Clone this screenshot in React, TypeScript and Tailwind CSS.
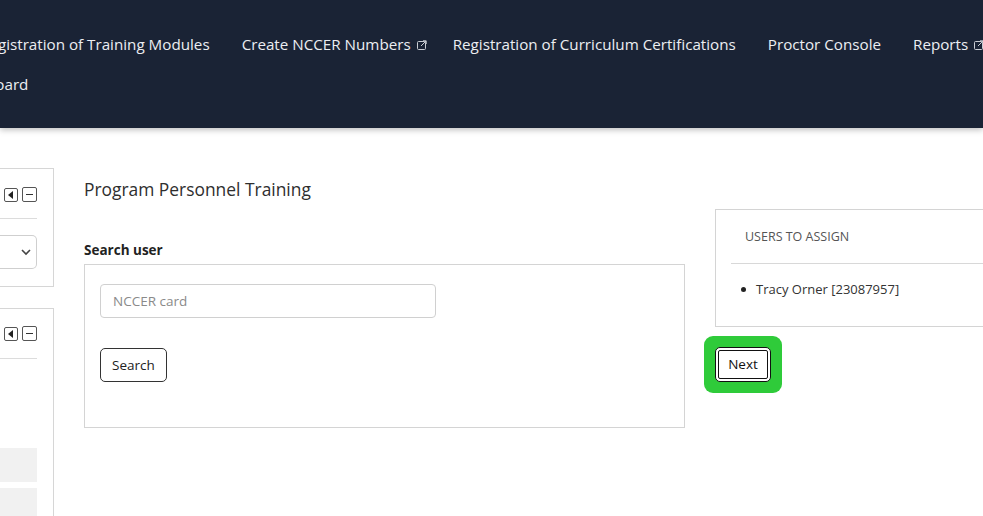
import React from "react";

function ExtIcon() {
  return (
    <svg width="10" height="10" viewBox="0 0 10 10" className="inline-block ml-[6px] mr-[-6px] mb-[1px]" fill="none" stroke="#c9ccd3" strokeWidth="1">
      <rect x="0.5" y="1.5" width="8" height="8" rx="1" />
      <path d="M4 6 L9 1 M6 0.8 H9.2 V4" />
    </svg>
  );
}

function TinyButtons() {
  return (
    <div className="flex items-center gap-[4px]">
      <div className="w-[14px] h-[14px] border border-[#555] rounded-[2px] flex items-center justify-center bg-white">
        <svg width="6" height="8" viewBox="0 0 6 8"><path d="M5 0 L0 4 L5 8 Z" fill="#222" /></svg>
      </div>
      <div className="w-[15px] h-[15px] border border-[#555] rounded-[2px] flex items-center justify-center bg-white">
        <div className="w-[7px] h-[1px] bg-[#333]" />
      </div>
    </div>
  );
}

export default function App() {
  const font = { fontFamily: '"Open Sans", "Noto Sans", sans-serif' };
  return (
    <div className="w-[983px] h-[516px] overflow-hidden bg-white relative" style={font}>
      <header className="h-[128px] bg-[#1a2335] text-[#eceef2] text-[15.2px] pt-[24px] relative z-10 shadow-[0_2px_6px_rgba(0,0,0,0.25)]">
        <div className="flex items-center gap-[32px] ml-[-20px] h-[40px] whitespace-nowrap">
          <span>Registration of Training Modules</span>
          <span>Create NCCER Numbers<ExtIcon /></span>
          <span>Registration of Curriculum Certifications</span>
          <span>Proctor Console</span>
          <span>Reports<ExtIcon /></span>
        </div>
        <div className="flex items-center ml-[-50px] h-[40px] whitespace-nowrap">
          <span>Dashboard</span>
        </div>
      </header>

      <div className="flex pt-[40px]">
        {/* sidebar */}
        <div className="w-[54px] shrink-0 flex flex-col">
          <div className="border border-l-0 border-[#d6d6d6] h-[119px] flex flex-col pr-[16px]">
            <div className="flex justify-end pt-[18px] pb-[16px]">
              <TinyButtons />
            </div>
            <div className="h-[1px] bg-[#dcdcdc]" />
            <div className="mt-[16px] h-[34px] border border-l-0 border-[#cfcfcf] rounded-r-[5px] flex items-center justify-end pr-[5px]">
              <svg width="10" height="7" viewBox="0 0 10 7"><path d="M1 1 L5 5 L9 1" stroke="#444" strokeWidth="1.6" fill="none" /></svg>
            </div>
          </div>
          <div className="mt-[21px] border border-l-0 border-b-0 border-[#d6d6d6] h-[300px] flex flex-col pr-[16px]">
            <div className="flex justify-end pt-[17px] pb-[17px]">
              <TinyButtons />
            </div>
            <div className="h-[1px] bg-[#dcdcdc]" />
            <div className="mt-[89px] h-[34px] bg-[#f1f1f1]" />
            <div className="mt-[6px] h-[34px] bg-[#f1f1f1]" />
          </div>
        </div>

        {/* main */}
        <div className="ml-[30px] w-[601px] shrink-0">
          <h1 className="text-[17.4px] text-[#2e2e2e] mt-[10px] leading-[22px]">Program Personnel Training</h1>
          <div className="mt-[41px] text-[13.5px] font-bold text-[#222] leading-[18px]">Search user</div>
          <div className="mt-[5px] border border-[#d4d4d4] h-[164px] px-[15px] pt-[19px]">
            <div className="w-[336px] h-[34px] border border-[#d0d0d0] rounded-[4px] flex items-center px-[12px] text-[13.5px] text-[#8a8a8a]">NCCER card</div>
            <button className="mt-[30px] h-[34px] px-[11px] border border-[#333] rounded-[5px] text-[13.5px] text-[#222] bg-white">Search</button>
          </div>
        </div>

        {/* right */}
        <div className="ml-[30px] flex-1 pt-[41px]">
          <div className="border border-r-0 border-[#d4d4d4] h-[118px] pl-[15px]">
            <div className="pl-[14px] pt-[18px] pb-[17px] text-[12.5px] text-[#555] leading-[18px]">USERS TO ASSIGN</div>
            <div className="h-[1px] bg-[#d8d8d8]" />
            <div className="flex items-center pl-[10px] pt-[16px] text-[13px] text-[#333]">
              <span className="w-[5px] h-[5px] rounded-full bg-[#222] mr-[10px]" />
              <span>Tracy Orner [23087957]</span>
            </div>
          </div>
          <div className="mt-[9px] ml-[-11px] w-[78px] h-[57px] rounded-[9px] bg-[#2fcb3a] flex items-center justify-center">
            <button className="w-[56px] h-[35px] bg-white rounded-[5px] border border-[#111] outline outline-1 outline-offset-[-4px] outline-[#111] text-[13.5px] text-[#111]">Next</button>
          </div>
        </div>
      </div>
    </div>
  );
}
